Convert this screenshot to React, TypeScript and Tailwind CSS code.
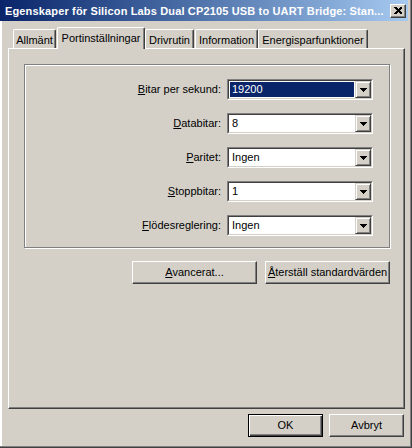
import React from "react";

function Arrow() {
  return (
    <svg width="7" height="4" viewBox="0 0 7 4" className="block">
      <path d="M0 0H7L3.5 4Z" fill="#000" shapeRendering="crispEdges" />
    </svg>
  );
}

function Combo({ value, selected }: { value: string; selected?: boolean }) {
  return (
    <div className="w-[146px] h-[21px] bg-white border border-t-[#808080] border-l-[#808080] border-r-white border-b-white flex">
      <div className="flex-1 flex border border-t-[#404040] border-l-[#404040] border-r-[#d4d0c8] border-b-[#d4d0c8]">
        <div className="flex-1 p-[1px] flex">
          <div
            className={
              selected
                ? "flex-1 bg-[#0a246a] text-white pl-[2px] leading-[15px]"
                : "flex-1 pl-[2px] leading-[15px]"
            }
          >
            {value}
          </div>
        </div>
        <div className="w-[16px] h-full bg-[#d4d0c8] border border-t-[#d4d0c8] border-l-[#d4d0c8] border-r-[#404040] border-b-[#404040] shadow-[inset_1px_1px_0_#fff,inset_-1px_-1px_0_#808080] flex items-center justify-center">
          <Arrow />
        </div>
      </div>
    </div>
  );
}

function Row({ u, rest, value, selected }: { u: string; rest: string; value: string; selected?: boolean }) {
  return (
    <div className="flex items-center h-[21px]">
      <div className="w-[197px] text-right pr-[1px]">
        <span className="underline">{u}</span>
        {rest}
      </div>
      <div className="ml-[5px]">
        <Combo value={value} selected={selected} />
      </div>
    </div>
  );
}

function Tab({ children, w, selected, ml }: { children: React.ReactNode; w: string; selected?: boolean; ml?: string }) {
  if (selected) {
    return (
      <div
        className={`relative z-10 ${w} ${ml ?? ""} h-[22px] -mb-[1px] bg-[#d4d0c8] border-l border-t border-r border-l-white border-t-white border-r-[#404040] rounded-tl-[2px] rounded-tr-[2px] shadow-[inset_-1px_0_0_#808080] flex justify-center pt-[2px]`}
      >
        {children}
      </div>
    );
  }
  return (
    <div
      className={`${w} ${ml ?? ""} h-[19px] bg-[#d4d0c8] border-l border-t border-r border-l-white border-t-white border-r-[#404040] rounded-tl-[2px] rounded-tr-[2px] shadow-[inset_-1px_0_0_#808080] flex justify-center pt-[2px]`}
    >
      {children}
    </div>
  );
}

function Btn({ children, w, def }: { children: React.ReactNode; w: string; def?: boolean }) {
  if (def) {
    return (
      <div className={`${w} h-[23px] border border-black shadow-[inset_1px_1px_0_#fff,inset_-1px_-1px_0_#404040,inset_-2px_-2px_0_#808080] flex items-center justify-center`}>
        {children}
      </div>
    );
  }
  return (
    <div className={`${w} h-[23px] border border-t-white border-l-white border-r-[#404040] border-b-[#404040] shadow-[inset_-1px_-1px_0_#808080] flex items-center justify-center`}>
      {children}
    </div>
  );
}

export default function App() {
  return (
    <div className="w-[412px] h-[448px] overflow-hidden bg-[#d4d0c8] text-black text-[11px] font-['Liberation_Sans',Arial,sans-serif] shadow-[inset_-1px_-1px_0_#404040,inset_-2px_-2px_0_#808080,inset_2px_0_0_#fff] flex flex-col">
      {/* Title bar */}
      <div className="w-[408px] h-[21px] bg-gradient-to-r from-[#0a246a] to-[#a6caf0] flex items-center pl-[5px] pr-[2px]">
        <div className="flex-1 text-white font-bold text-[11px] tracking-[0.15px] whitespace-nowrap overflow-hidden leading-[14px]">
          Egenskaper för Silicon Labs Dual CP2105 USB to UART Bridge: Stan...
        </div>
        <div className="w-[16px] h-[14px] bg-[#d4d0c8] border border-t-white border-l-white border-r-[#404040] border-b-[#404040] shadow-[inset_-1px_-1px_0_#808080] flex items-center justify-center">
          <svg width="8" height="7" viewBox="0 0 8 7" className="block">
            <path d="M0 0h2l2 2 2-2h2v1L5.5 3.5 8 6v1H6L4 5 2 7H0V6l2.5-2.5L0 1z" fill="#000" shapeRendering="crispEdges" />
          </svg>
        </div>
      </div>

      {/* Tabs + panel */}
      <div className="pl-[8px] pt-[6px]">
        <div className="flex items-end h-[21px] pl-[5px]">
          <Tab w="w-[43px]">Allmänt</Tab>
          <Tab w="w-[88px]" ml="ml-[1px]" selected>
            Portinställningar
          </Tab>
          <Tab w="w-[49px]">Drivrutin</Tab>
          <Tab w="w-[63px]" ml="ml-[1px]">Information</Tab>
          <Tab w="w-[110px]">Energisparfunktioner</Tab>
        </div>
        <div className="w-[397px] h-[361px] border border-t-white border-l-white border-r-[#404040] border-b-[#404040] shadow-[inset_-1px_-1px_0_#808080] pl-[15px] pt-[15px]">
          <div className="w-[366px] h-[184px] border border-[#808080] shadow-[inset_1px_1px_0_#fff,1px_1px_0_#fff] pt-[14px] flex flex-col gap-[13px]">
            <Row u="B" rest="itar per sekund:" value="19200" selected />
            <Row u="D" rest="atabitar:" value="8" />
            <Row u="P" rest="aritet:" value="Ingen" />
            <Row u="S" rest="toppbitar:" value="1" />
            <Row u="F" rest="lödesreglering:" value="Ingen" />
          </div>
          <div className="w-[366px] mt-[13px] flex justify-end gap-[8px]">
            <Btn w="w-[125px]">
              <span>
                <span className="underline">A</span>vancerat...
              </span>
            </Btn>
            <Btn w="w-[125px]">
              <span>
                <span className="underline">Å</span>terställ standardvärden
              </span>
            </Btn>
          </div>
        </div>
      </div>

      {/* Bottom buttons */}
      <div className="flex justify-end gap-[6px] pr-[8px] mt-[5px]">
        <Btn w="w-[75px]" def>
          OK
        </Btn>
        <Btn w="w-[75px]">Avbryt</Btn>
      </div>
    </div>
  );
}
